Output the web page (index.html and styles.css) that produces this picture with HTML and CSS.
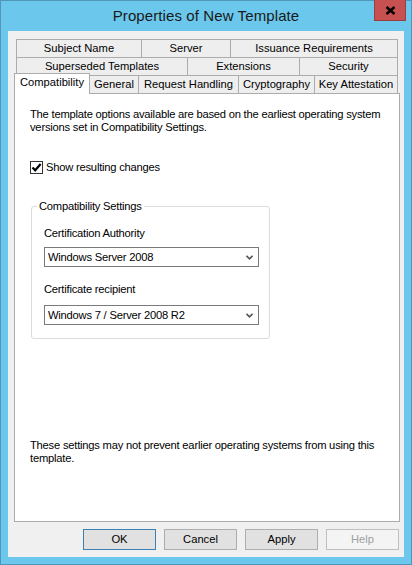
FILE: index.html
```html
<!DOCTYPE html>
<html>
<head>
<meta charset="utf-8">
<title>Properties of New Template</title>
<link rel="stylesheet" href="styles.css">
</head>
<body>
<div class="window">
  <div class="titlebar">
    <div class="title">Properties of New Template</div>
    <div class="close">
      <svg width="11" height="9" viewBox="0 0 11 9"><path d="M1.5 1 L9.5 8 M9.5 1 L1.5 8" stroke="#000" stroke-width="2.4" fill="none"/></svg>
    </div>
  </div>
  <div class="client">
    <div class="tabrow">
      <div class="tab w126">Subject Name</div>
      <div class="tab w90">Server</div>
      <div class="tab w168">Issuance Requirements</div>
    </div>
    <div class="tabrow">
      <div class="tab w172">Superseded Templates</div>
      <div class="tab w113">Extensions</div>
      <div class="tab w99">Security</div>
    </div>
    <div class="tabrow last">
      <div class="tab selected">Compatibility</div>
      <div class="tab w50">General</div>
      <div class="tab w101">Request Handling</div>
      <div class="tab w77">Cryptography</div>
      <div class="tab w84">Key Attestation</div>
    </div>
    <div class="panel">
      <p class="intro">The template options available are based on the earliest operating system versions set in Compatibility Settings.</p>
      <label class="check">
        <span class="box"><svg width="11" height="11" viewBox="0 0 11 11"><path d="M1.5 5.5 L4.2 8.3 L9.6 2" stroke="#000" stroke-width="2.2" fill="none"/></svg></span>
        <span>Show resulting changes</span>
      </label>
      <fieldset class="group">
        <legend>Compatibility Settings</legend>
        <div class="group-body">
          <div class="label first">Certification Authority</div>
          <div class="combo"><span>Windows Server 2008</span><svg width="7" height="5" viewBox="0 0 7 5"><path d="M0.5 0.8 L3.5 3.8 L6.5 0.8" stroke="#555" stroke-width="1.6" fill="none"/></svg></div>
          <div class="label second">Certificate recipient</div>
          <div class="combo"><span>Windows 7 / Server 2008 R2</span><svg width="7" height="5" viewBox="0 0 7 5"><path d="M0.5 0.8 L3.5 3.8 L6.5 0.8" stroke="#555" stroke-width="1.6" fill="none"/></svg></div>
        </div>
      </fieldset>
      <p class="note">These settings may not prevent earlier operating systems from using this template.</p>
    </div>
    <div class="buttons">
      <div class="btn default">OK</div>
      <div class="btn">Cancel</div>
      <div class="btn">Apply</div>
      <div class="btn disabled">Help</div>
    </div>
  </div>
</div>
</body>
</html>
```
FILE: styles.css
```css
* { box-sizing: border-box; }
html, body { margin: 0; padding: 0; background: #6bc8ec; }
body {
  font-family: "Liberation Sans", Arial, sans-serif;
  font-size: 11.2px;
  letter-spacing: -0.22px;
  line-height: 13px;
  color: #000;
}
.window {
  width: 412px;
  height: 565px;
  border: 1px solid #4f97b8;
  background: #6bc8ec;
  display: flex;
  flex-direction: column;
}
.titlebar {
  height: 30px;
  position: relative;
  flex: none;
}
.title {
  text-align: center;
  font-size: 15px;
  letter-spacing: 0.1px;
  line-height: 18px;
  padding-top: 6px;
  color: #1a1a1a;
}
.close {
  position: absolute;
  top: -1px;
  right: 5px;
  width: 32px;
  height: 21px;
  background: #c75050;
  border: 1px solid #9c3c3c;
  border-top: none;
  display: flex;
  align-items: center;
  justify-content: center;
}
.client {
  flex: 1;
  margin: 0 7px 7px 7px;
  background: #f0f0f0;
  padding: 8px 5px 0 6px;
  display: flex;
  flex-direction: column;
}
.tabrow {
  display: flex;
  margin-left: 2px;
  height: 18px;
}
.tabrow.last {
  margin-left: 0;
  margin-top: -2px;
  height: 20px;
  align-items: flex-end;
  position: relative;
  z-index: 1;
}
.tab {
  height: 18px;
  border: 1px solid #acacac;
  border-bottom: none;
  background: #eeeeee;
  text-align: center;
  line-height: 17px;
  white-space: nowrap;
  flex: none;
  letter-spacing: 0;
}
.tab + .tab { margin-left: -1px; }
.tab.selected {
  width: 76px;
  height: 21px;
  margin-bottom: -1px;
  background: #fff;
  line-height: 17px;
  border-color: #acacac;
  position: relative;
  z-index: 2;
}
.tab.selected + .tab { border-left-color: transparent; }
.w126 { width: 126px; }
.w90 { width: 90px; }
.w168 { width: 168px; }
.w172 { width: 172px; }
.w113 { width: 113px; }
.w99 { width: 99px; }
.w50 { width: 50px; }
.w101 { width: 101px; }
.w77 { width: 77px; }
.w84 { width: 84px; }
.panel {
  width: 386px;
  height: 429px;
  background: #fff;
  border: 1px solid #acacac;
  padding: 14px 4px 56px 15px;
  display: flex;
  flex-direction: column;
  flex: none;
}
.intro { margin: 0; }
.check {
  display: flex;
  align-items: center;
  height: 13px;
  margin-top: 27px;
}
.box {
  width: 13px;
  height: 13px;
  border: 1px solid #333;
  background: #fff;
  display: flex;
  align-items: center;
  justify-content: center;
  margin-right: 3px;
}
.group {
  width: 239px;
  margin: 26px 0 0 1px;
  padding: 0;
  border: 1px solid #dcdcdc;
  border-radius: 3px;
  min-width: 0;
}
.group legend {
  padding: 0 2px;
  margin-left: 5px;
  line-height: 13px;
}
.group-body {
  padding: 14px 11px 13px 12px;
}
.label { height: 13px; }
.label.first { margin-bottom: 7px; }
.label.second { margin-top: 16px; margin-bottom: 9px; }
.combo {
  width: 215px;
  height: 20px;
  border: 1px solid #7a7a7a;
  background: #fff;
  display: flex;
  align-items: center;
  justify-content: space-between;
  padding: 0 5px 0 3px;
}
.note { margin: auto 0 0 0; }
.buttons {
  display: flex;
  justify-content: flex-end;
  gap: 8px;
  margin-top: 7px;
}
.btn {
  width: 73px;
  height: 21px;
  border: 1px solid #adadad;
  background: #e1e1e1;
  text-align: center;
  line-height: 19px;
  letter-spacing: 0;
}
.btn.default { border-color: #3c7fb1; }
.btn.disabled {
  border-color: #bfbfbf;
  background: #f4f4f4;
  color: #a0a0a0;
}
```
